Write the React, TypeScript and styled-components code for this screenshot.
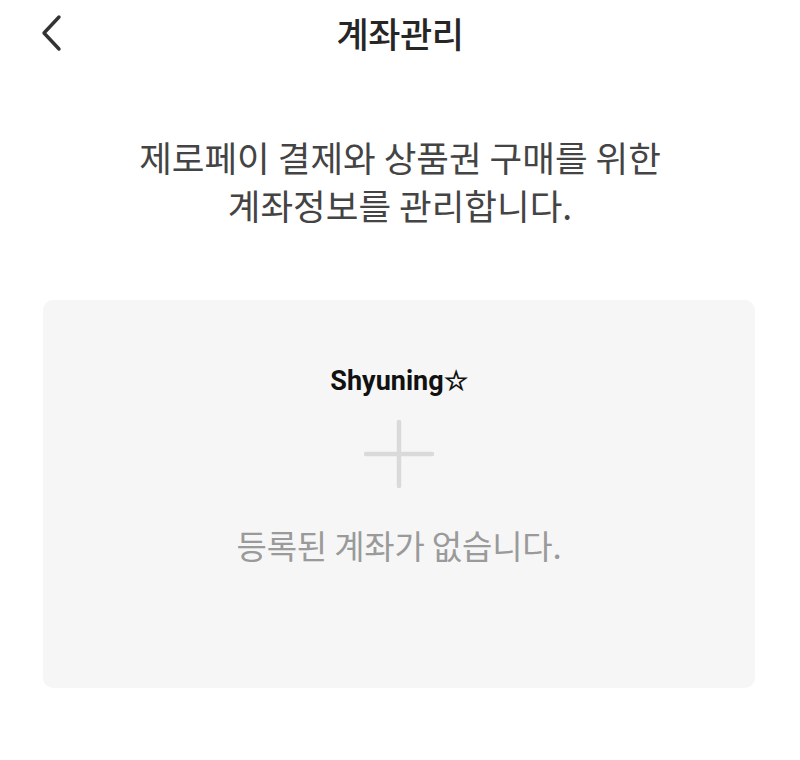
import React from "react";
import styled, { createGlobalStyle } from "styled-components";

const Global = createGlobalStyle`
  html, body { margin: 0; padding: 0; background: #fff; }
  body { font-family: "Noto Sans CJK KR", "Noto Sans", sans-serif; }
`;

const Page = styled.div`
  width: 800px;
  height: 760px;
  background: #fff;
  display: flex;
  flex-direction: column;
`;

const Header = styled.header`
  position: relative;
  height: 66px;
  display: flex;
  align-items: center;
  justify-content: center;
`;

const BackButton = styled.button`
  position: absolute;
  left: 30px;
  top: 12px;
  width: 40px;
  height: 42px;
  border: 0;
  background: none;
  padding: 0;
  display: flex;
  align-items: center;
  justify-content: center;
`;

const Title = styled.h1`
  margin: 0;
  font-size: 35px;
  line-height: 44px;
  font-weight: 500;
  color: #262626;
  letter-spacing: -0.5px;
`;

const Description = styled.p`
  margin: 67px 0 0;
  text-align: center;
  font-size: 35.5px;
  line-height: 48px;
  font-weight: 400;
  color: #444;
  letter-spacing: 0;
`;

const Card = styled.section`
  margin: 71px 45px 0 43px;
  height: 388px;
  border-radius: 10px;
  background: #f6f6f6;
  display: flex;
  flex-direction: column;
  align-items: center;
`;

const Owner = styled.div`
  margin-top: 63px;
  font-family: Roboto, "Noto Sans", sans-serif;
  font-size: 27px;
  font-weight: 700;
  color: #111;
  line-height: 36px;
`;

const PlusWrap = styled.div`
  margin-top: 21px;
  width: 70px;
  height: 68px;
`;

const Empty = styled.div`
  margin-top: 35px;
  font-size: 33px;
  color: #9a9a9a;
  line-height: 44px;
  letter-spacing: -0.2px;
`;

export default function App() {
  return (
    <>
      <Global />
      <Page>
        <Header>
          <BackButton aria-label="뒤로">
            <svg width="26" height="38" viewBox="0 0 26 38" fill="none">
              <path d="M22 3 L7 19 L22 35" stroke="#333" strokeWidth="3.4" strokeLinecap="round" strokeLinejoin="round" />
            </svg>
          </BackButton>
          <Title>계좌관리</Title>
        </Header>
        <Description>
          제로페이 결제와 상품권 구매를 위한
          <br />
          계좌정보를 관리합니다.
        </Description>
        <Card>
          <Owner>Shyuning☆</Owner>
          <PlusWrap>
            <svg width="70" height="68" viewBox="0 0 70 68">
              <path d="M35 2 V66 M2 34 H68" stroke="#dadada" strokeWidth="4.5" strokeLinecap="round" />
            </svg>
          </PlusWrap>
          <Empty>등록된 계좌가 없습니다.</Empty>
        </Card>
      </Page>
    </>
  );
}
